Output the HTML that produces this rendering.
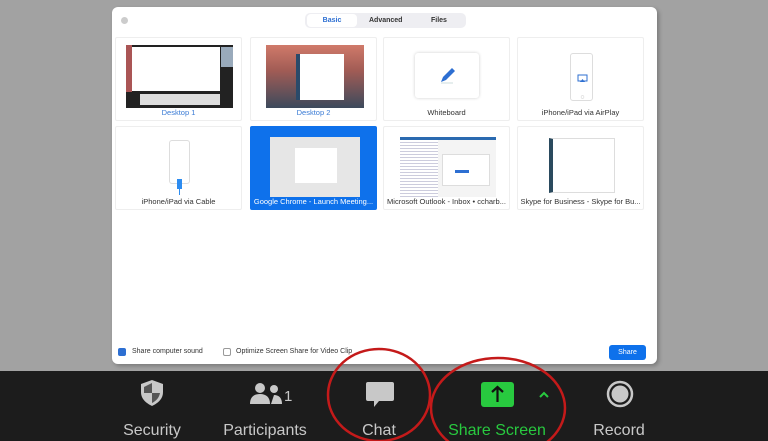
<!DOCTYPE html>
<html><head><meta charset="utf-8"><style>
*{margin:0;padding:0;box-sizing:border-box}
body{width:768px;height:441px;background:#a2a2a2;position:relative;overflow:hidden;font-family:"Liberation Sans",sans-serif}
.dlg{position:absolute;left:112px;top:7px;width:545px;height:357px;background:#fff;border-radius:6px;box-shadow:2px 2px 4px rgba(0,0,0,.25)}
.dot{position:absolute;left:9px;top:10px;width:7px;height:7px;border-radius:50%;background:#ccc}
.tabs{position:absolute;left:193px;top:6px;width:161px;height:15px;background:#eeeef2;border-radius:5px;font-size:7px;font-weight:bold;color:#333;line-height:15px}
.tabs span{position:absolute;top:0}
.tabs .on{left:2px;top:1px;width:50px;height:13px;background:#fff;border-radius:4px;color:#2d6fd2;text-align:center;line-height:13px}
.tile{position:absolute;width:127px;height:84px;border:1px solid #eee;border-radius:2px;font-size:7.5px;color:#333;text-align:center}
.tile .lb{position:absolute;left:0;right:0;bottom:3px;white-space:nowrap;overflow:hidden}
.th{position:absolute}
.sel{background:#0e71eb;color:#fff;border-color:#0e71eb}
.bar{position:absolute;left:0;top:371px;width:768px;height:70px;background:#1c1c1c}
.it{position:absolute;top:422px;font-size:16px;color:#c8c8c8;transform:translateX(-50%);white-space:nowrap}
</style></head><body>
<div class="dlg">
<div class="dot"></div>
<div class="tabs"><span class="on">Basic</span><span style="left:64px">Advanced</span><span style="left:126px">Files</span></div>

<div class="tile" style="left:3px;top:30px">
 <div class="th" style="left:10px;top:7px;width:107px;height:63px;background:#222"><div style="position:absolute;left:6px;top:2px;width:88px;height:44px;background:#fff"></div><div style="position:absolute;left:95px;top:2px;width:12px;height:20px;background:#9ab"></div><div style="position:absolute;left:14px;top:49px;width:80px;height:11px;background:#ddd"></div><div style="position:absolute;left:0;top:0;width:6px;height:47px;background:#a55"></div></div>
 <div class="lb" style="color:#3a7bd5">Desktop 1</div></div>
<div class="tile" style="left:138px;top:30px">
 <div class="th" style="left:15px;top:7px;width:98px;height:63px;background:linear-gradient(#d07a6a,#a25c55 40%,#3c4a5c)"><div style="position:absolute;left:30px;top:9px;width:48px;height:46px;background:#fff;border-left:4px solid #2a4a6a"></div></div>
 <div class="lb" style="color:#3a7bd5">Desktop 2</div></div>
<div class="tile" style="left:271px;top:30px">
 <div class="th" style="left:31px;top:15px;width:64px;height:45px;background:#fff;border-radius:3px;box-shadow:0 0 3px rgba(0,0,0,.2)"><svg width="64" height="45"><path d="M26 29l2-5 9-9 3 3-9 9z" fill="#2d6fd2"/><path d="M26 30h12" stroke="#9bb" stroke-width=".5"/></svg></div>
 <div class="lb">Whiteboard</div></div>
<div class="tile" style="left:405px;top:30px">
 <div class="th" style="left:52px;top:15px;width:23px;height:48px;border:1px solid #ddd;border-radius:3px"><svg width="23" height="48"><rect x="7" y="21" width="9" height="6" fill="none" stroke="#2d6fd2" stroke-width="1"/><path d="M9 28l2.5-3 2.5 3z" fill="#2d6fd2"/><circle cx="11.5" cy="43" r="1.5" fill="none" stroke="#ccc" stroke-width=".5"/></svg></div>
 <div class="lb">iPhone/iPad via AirPlay</div></div>

<div class="tile" style="left:3px;top:119px">
 <div class="th" style="left:53px;top:13px;width:21px;height:44px;border:1px solid #ddd;border-radius:3px"></div>
 <div class="th" style="left:61px;top:52px;width:5px;height:10px;background:#2d8cf0"></div>
 <div class="th" style="left:63px;top:62px;width:1px;height:6px;background:#2d8cf0"></div>
 <div class="lb">iPhone/iPad via Cable</div></div>
<div class="tile sel" style="left:138px;top:119px">
 <div class="th" style="left:19px;top:10px;width:90px;height:60px;background:#e6e6e6"><div style="position:absolute;left:25px;top:11px;width:42px;height:35px;background:#fff"></div></div>
 <div class="lb" style="color:#fff">Google Chrome - Launch Meeting...</div></div>
<div class="tile" style="left:271px;top:119px">
 <div class="th" style="left:16px;top:10px;width:96px;height:60px;background:#f4f4f4;border-top:3px solid #2a6ab0"><div style="position:absolute;left:0;top:0;width:38px;height:57px;background:repeating-linear-gradient(#fff 0 2px,#ccd 2px 3px)"></div><div style="position:absolute;left:42px;top:14px;width:48px;height:32px;background:#fff;border:1px solid #ddd"></div><div style="position:absolute;left:55px;top:30px;width:14px;height:3px;background:#2d6fd2"></div></div>
 <div class="lb">Microsoft Outlook - Inbox • ccharb...</div></div>
<div class="tile" style="left:405px;top:119px">
 <div class="th" style="left:31px;top:11px;width:66px;height:55px;background:#fff;border:1px solid #ddd;border-left:4px solid #2a4a5e"></div>
 <div class="lb">Skype for Business - Skype for Bu...</div></div>

<div style="position:absolute;left:6px;top:341px;width:8px;height:8px;background:#2d6fd2;border-radius:2px"></div>
<div style="position:absolute;left:20px;top:341px;font-size:7px;color:#333">Share computer sound</div>
<div style="position:absolute;left:111px;top:341px;width:8px;height:8px;border:1px solid #999;border-radius:2px"></div>
<div style="position:absolute;left:124px;top:341px;font-size:7px;color:#333">Optimize Screen Share for Video Clip</div>
<div style="position:absolute;left:497px;top:338px;width:37px;height:15px;background:#0e71eb;border-radius:3px;color:#fff;font-size:7px;text-align:center;line-height:15px">Share</div>
</div>

<div class="bar"></div>
<svg style="position:absolute;left:0;top:371px" width="768" height="70">
<path d="M152 9l11 4v8c0 7-5 11-11 14c-6-3-11-7-11-14v-8z" fill="#c8c8c8"/><path d="M152 12v10h-8v-1c0-4 0 0 0-5l8-4zM152 22h8c-1 5-4 8-8 10z" fill="#555"/>
<circle cx="260" cy="17" r="5" fill="#c8c8c8"/><path d="M250 33c0-7 4-10 10-10s10 3 10 10z" fill="#c8c8c8"/><circle cx="274" cy="18" r="4" fill="#c8c8c8"/><path d="M271 33h11c0-6-3-9-8-9z" fill="#c8c8c8"/>
<text x="284" y="30" font-size="15" fill="#c8c8c8" font-family="Liberation Sans">1</text>
<path d="M368 11h24a2 2 0 0 1 2 2v15a2 2 0 0 1-2 2h-13l-5 6v-6h-6a2 2 0 0 1-2-2v-15a2 2 0 0 1 2-2z" fill="#c8c8c8"/>
<rect x="481" y="11" width="33" height="25" rx="3" fill="#28c93f"/><path d="M497.5 16v15M492 21l5.5-5 5.5 5" stroke="#111" stroke-width="2.2" fill="none"/>
<path d="M540 26l4-4 4 4" stroke="#28c93f" stroke-width="2" fill="none"/>
<circle cx="620" cy="23" r="12" fill="none" stroke="#c8c8c8" stroke-width="2.5"/><circle cx="620" cy="23" r="8.5" fill="#c8c8c8"/>
</svg>
<div class="it" style="left:152px">Security</div>
<div class="it" style="left:265px">Participants</div>
<div class="it" style="left:379px">Chat</div>
<div class="it" style="left:497px;color:#28c93f">Share Screen</div>
<div class="it" style="left:619px">Record</div>
<svg style="position:absolute;left:0;top:0" width="768" height="441"><ellipse cx="379" cy="395" rx="51" ry="46" fill="none" stroke="#c41a1a" stroke-width="2.5"/><ellipse cx="498" cy="408" rx="67" ry="50" fill="none" stroke="#c41a1a" stroke-width="2.5"/></svg>
</body></html>
